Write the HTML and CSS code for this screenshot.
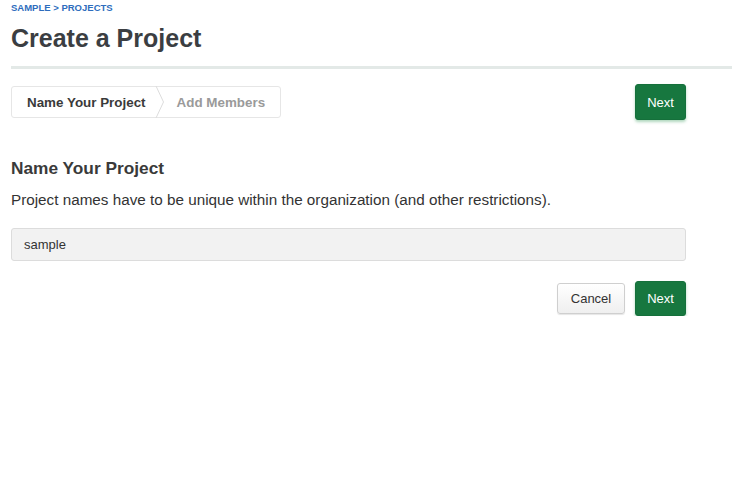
FILE: index.html
```html
<!DOCTYPE html>
<html>
<head>
<meta charset="utf-8">
<link rel="stylesheet" href="styles.css">
</head>
<body>
<div class="page">
  <header class="head">
    <div class="crumb"><a href="#">SAMPLE</a> &gt; <a href="#">PROJECTS</a></div>
    <h1 class="title">Create a Project</h1>
  </header>
  <main class="content">
    <div class="toprow">
      <div class="steps">
        <span class="step active">Name Your Project</span>
        <svg class="chev" width="10" height="32" viewBox="0 0 10 32"><polyline points="1,0 8.5,16 1,32" fill="none" stroke="#dcdcdc" stroke-width="1"/></svg>
        <span class="step">Add Members</span>
      </div>
      <button class="btn primary tall">Next</button>
    </div>
    <h2 class="section">Name Your Project</h2>
    <p class="desc">Project names have to be unique within the organization (and other restrictions).</p>
    <div class="input">sample</div>
    <div class="actions">
      <button class="btn cancel">Cancel</button>
      <button class="btn primary">Next</button>
    </div>
  </main>
</div>
</body>
</html>
```
FILE: styles.css
```css
html, body { margin: 0; padding: 0; background: #fff; }
body { font-family: "Liberation Sans", Arial, sans-serif; color: #333; }
.page { padding-left: 11px; }
.head { border-bottom: 3px solid #e3e9e7; padding-bottom: 13px; }
.crumb { font-size: 9.5px; font-weight: bold; color: #2e6dbd; line-height: 12px; padding-top: 2px; }
.crumb a { color: #2e6dbd; text-decoration: none; }
.title { margin: 9px 0 0 0; font-size: 25px; line-height: 30px; font-weight: bold; color: #3b3e42; }
.content { width: 675px; }
.toprow { display: flex; align-items: center; justify-content: space-between; margin-top: 15px; }
.steps { display: flex; align-items: center; height: 30px; border: 1px solid #e6e6e6; border-radius: 3px; }
.step { font-size: 13.4px; font-weight: bold; color: #9a9a9a; padding: 0 15px 0 12px; }
.step.active { color: #3a3a3a; padding: 0 9px 0 15px; }
.chev { display: block; }
.btn { font-family: "Liberation Sans", Arial, sans-serif; font-size: 13px; border-radius: 3px; cursor: pointer; padding: 0; }
.btn.primary { background: #17773f; color: #fff; border: 1px solid #15703b; width: 51px; height: 35px; box-shadow: 0 2px 3px rgba(30, 140, 70, 0.35); }
.btn.primary.tall { height: 36px; }
.btn.cancel { background: linear-gradient(#ffffff, #efefef); color: #333; border: 1px solid #cfcfcf; width: 68px; height: 31px; box-shadow: 0 1px 1px rgba(0,0,0,0.1); }
.section { margin: 38px 0 0 0; font-size: 17.3px; line-height: 20px; font-weight: bold; color: #3a3a3a; }
.desc { margin: 12px 0 0 0; font-size: 15.25px; line-height: 20px; color: #333; }
.input { margin-top: 18px; height: 31px; line-height: 31px; background: #f2f2f2; border: 1px solid #dcdcdc; border-radius: 3px; padding-left: 12px; font-size: 13px; color: #333; }
.actions { display: flex; justify-content: flex-end; align-items: center; gap: 10px; margin-top: 20px; }
```
